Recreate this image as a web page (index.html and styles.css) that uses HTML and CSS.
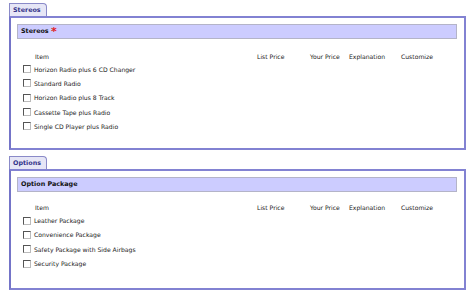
FILE: index.html
```html
<!DOCTYPE html>
<html lang="en">
<head>
    <meta charset="UTF-8">
    <title>Stereos and Options</title>
    <link rel="stylesheet" href="styles.css">
</head>
<body>
    <div class="section">
        <div class="tab">Stereos</div>
        <div class="panel">
            <div class="group-head">Stereos <span class="required">*</span></div>
            <div class="cols">
                <span>Item</span>
                <span>List Price</span>
                <span>Your Price</span>
                <span>Explanation</span>
                <span>Customize</span>
            </div>
            <label class="row"><input type="checkbox"> Horizon Radio plus 6 CD Changer</label>
            <label class="row"><input type="checkbox"> Standard Radio</label>
            <label class="row"><input type="checkbox"> Horizon Radio plus 8 Track</label>
            <label class="row"><input type="checkbox"> Cassette Tape plus Radio</label>
            <label class="row"><input type="checkbox"> Single CD Player plus Radio</label>
        </div>
    </div>

    <div class="section">
        <div class="tab">Options</div>
        <div class="panel">
            <div class="group-head">Option Package</div>
            <div class="cols">
                <span>Item</span>
                <span>List Price</span>
                <span>Your Price</span>
                <span>Explanation</span>
                <span>Customize</span>
            </div>
            <label class="row"><input type="checkbox"> Leather Package</label>
            <label class="row"><input type="checkbox"> Convenience Package</label>
            <label class="row"><input type="checkbox"> Safety Package with Side Airbags</label>
            <label class="row"><input type="checkbox"> Security Package</label>
        </div>
    </div>
</body>
</html>
```

FILE: styles.css
```css
body {
    font-family: "DejaVu Sans", Verdana, sans-serif;
    font-size: 6.1px;
    color: #222222;
    background-color: #ffffff;
    margin: 0;
    padding: 3px 8px 0 9px;
}

.section {
    margin-bottom: 6px;
}

.tab {
    display: inline-block;
    height: 12px;
    line-height: 12px;
    padding: 0 5px 0 3px;
    border: 1px solid #8a8ac8;
    border-bottom: none;
    border-top-right-radius: 4px;
    background-color: #e6e6f6;
    color: #34348a;
    font-weight: bold;
    font-size: 6.4px;
    vertical-align: bottom;
}

.panel {
    border: 2px solid #8282d2;
    border-left-color: #7474c8;
    padding: 6px 7px 15px 6px;
}

.section + .section .panel {
    padding-bottom: 17px;
}

.group-head {
    height: 13px;
    line-height: 13px;
    padding-left: 3px;
    background-color: #ccccff;
    border: 1px solid #b4b4c8;
    font-weight: bold;
    font-size: 6.4px;
    color: #111111;
    margin-bottom: 12px;
}

.section + .section .group-head {
    margin-bottom: 10px;
}

.required {
    color: #e02020;
    font-size: 11px;
    vertical-align: -2px;
}

.cols {
    display: grid;
    grid-template-columns: 222px 53px 39px 52px 60px;
    padding-left: 18px;
    height: 11px;
    line-height: 11px;
}

.row {
    display: flex;
    align-items: center;
    height: 14.3px;
    padding-left: 6px;
    gap: 3px;
}

.row input {
    width: 8px;
    height: 8px;
    margin: 0;
    appearance: none;
    border: 1px solid #555555;
    border-right-color: #bbbbbb;
    border-bottom-color: #bbbbbb;
    background-color: #ffffff;
}
```
